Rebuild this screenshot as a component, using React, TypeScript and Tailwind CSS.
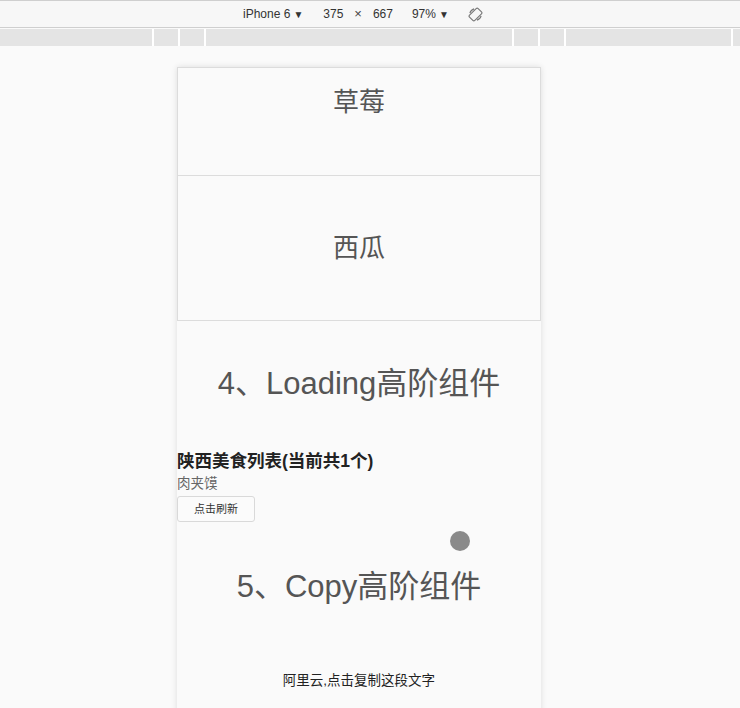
import React from 'react';

const font = { fontFamily: '"Liberation Sans", "Noto Sans CJK SC", sans-serif' };

// 頂部設備工具列
const DeviceBar: React.FC = () => (
  <div className="h-[28px] border-t border-b border-[#cfcfcf] bg-[#f7f7f7] flex items-center text-[12px] text-[#333]">
    <div className="ml-[243px] flex items-center">
      <span>iPhone 6</span>
      <span className="ml-[3px] text-[10px]">▼</span>
    </div>
    <span className="ml-[20px]">375</span>
    <span className="ml-[11px] text-[13px] text-[#444]">×</span>
    <span className="ml-[11px]">667</span>
    <div className="ml-[19px] flex items-center">
      <span>97%</span>
      <span className="ml-[3px] text-[10px]">▼</span>
    </div>
    <svg className="ml-[19px]" width="15" height="15" viewBox="0 0 16 16" fill="none" stroke="#777" strokeWidth="1.2">
      <rect x="4" y="1.5" width="8" height="13" rx="1.5" transform="rotate(45 8 8)" />
      <path d="M2 6.5 A6.5 6.5 0 0 1 6.5 2" />
      <path d="M14 9.5 A6.5 6.5 0 0 1 9.5 14" />
    </svg>
  </div>
);

// 尺規條
const Ruler: React.FC = () => {
  const ticks = [152, 178, 204, 512, 538, 564, 731];
  return (
    <div className="relative h-[17px] mt-[1px] bg-[#e4e4e4]">
      {ticks.map((x) => (
        <div key={x} className="absolute top-0 h-full w-[2px] bg-white" style={{ left: x }} />
      ))}
    </div>
  );
};

const App: React.FC = () => {
  return (
    <div className="w-[740px] h-[708px] overflow-hidden bg-[#fafafa]" style={font}>
      <DeviceBar />
      <Ruler />

      <div className="pt-[21px]">
        <div className="ml-[177px] w-[364px] h-[700px] bg-[#fafafa] shadow-[0_0_6px_rgba(0,0,0,0.12)]">
          {/* 水果方塊 */}
          <div className="h-[109px] border border-[#dcdcdc] flex justify-center">
            <span className="mt-[14px] text-[26px] leading-[40px] text-[#555]">草莓</span>
          </div>
          <div className="h-[145px] border border-t-0 border-[#dcdcdc] flex items-center justify-center">
            <span className="text-[26px] leading-[40px] text-[#555]">西瓜</span>
          </div>

          {/* Loading 高階組件 */}
          <div className="mt-[43px] text-center text-[31px] leading-[40px] text-[#555]">4、Loading高阶组件</div>
          <div className="mt-[45px] text-[17.5px] leading-[24px] font-semibold text-[#222]">陕西美食列表(当前共1个)</div>
          <div className="text-[13.5px] leading-[22px] text-[#666]">肉夹馍</div>
          <button className="mt-[1px] w-[78px] h-[26px] border border-[#d9d9d9] rounded-[3px] bg-[#fbfbfb] text-[11px] text-[#333]">
            点击刷新
          </button>

          {/* Copy 高階組件 */}
          <div className="relative">
            <div className="absolute left-[273px] top-[9px] w-[20px] h-[20px] rounded-full bg-[#8a8a8a]" />
          </div>
          <div className="mt-[45px] text-center text-[31px] leading-[40px] text-[#555]">5、Copy高阶组件</div>
          <div className="mt-[64px] text-center text-[13.5px] leading-[20px] text-[#222]">阿里云,点击复制这段文字</div>
        </div>
      </div>
    </div>
  );
};

export default App;
